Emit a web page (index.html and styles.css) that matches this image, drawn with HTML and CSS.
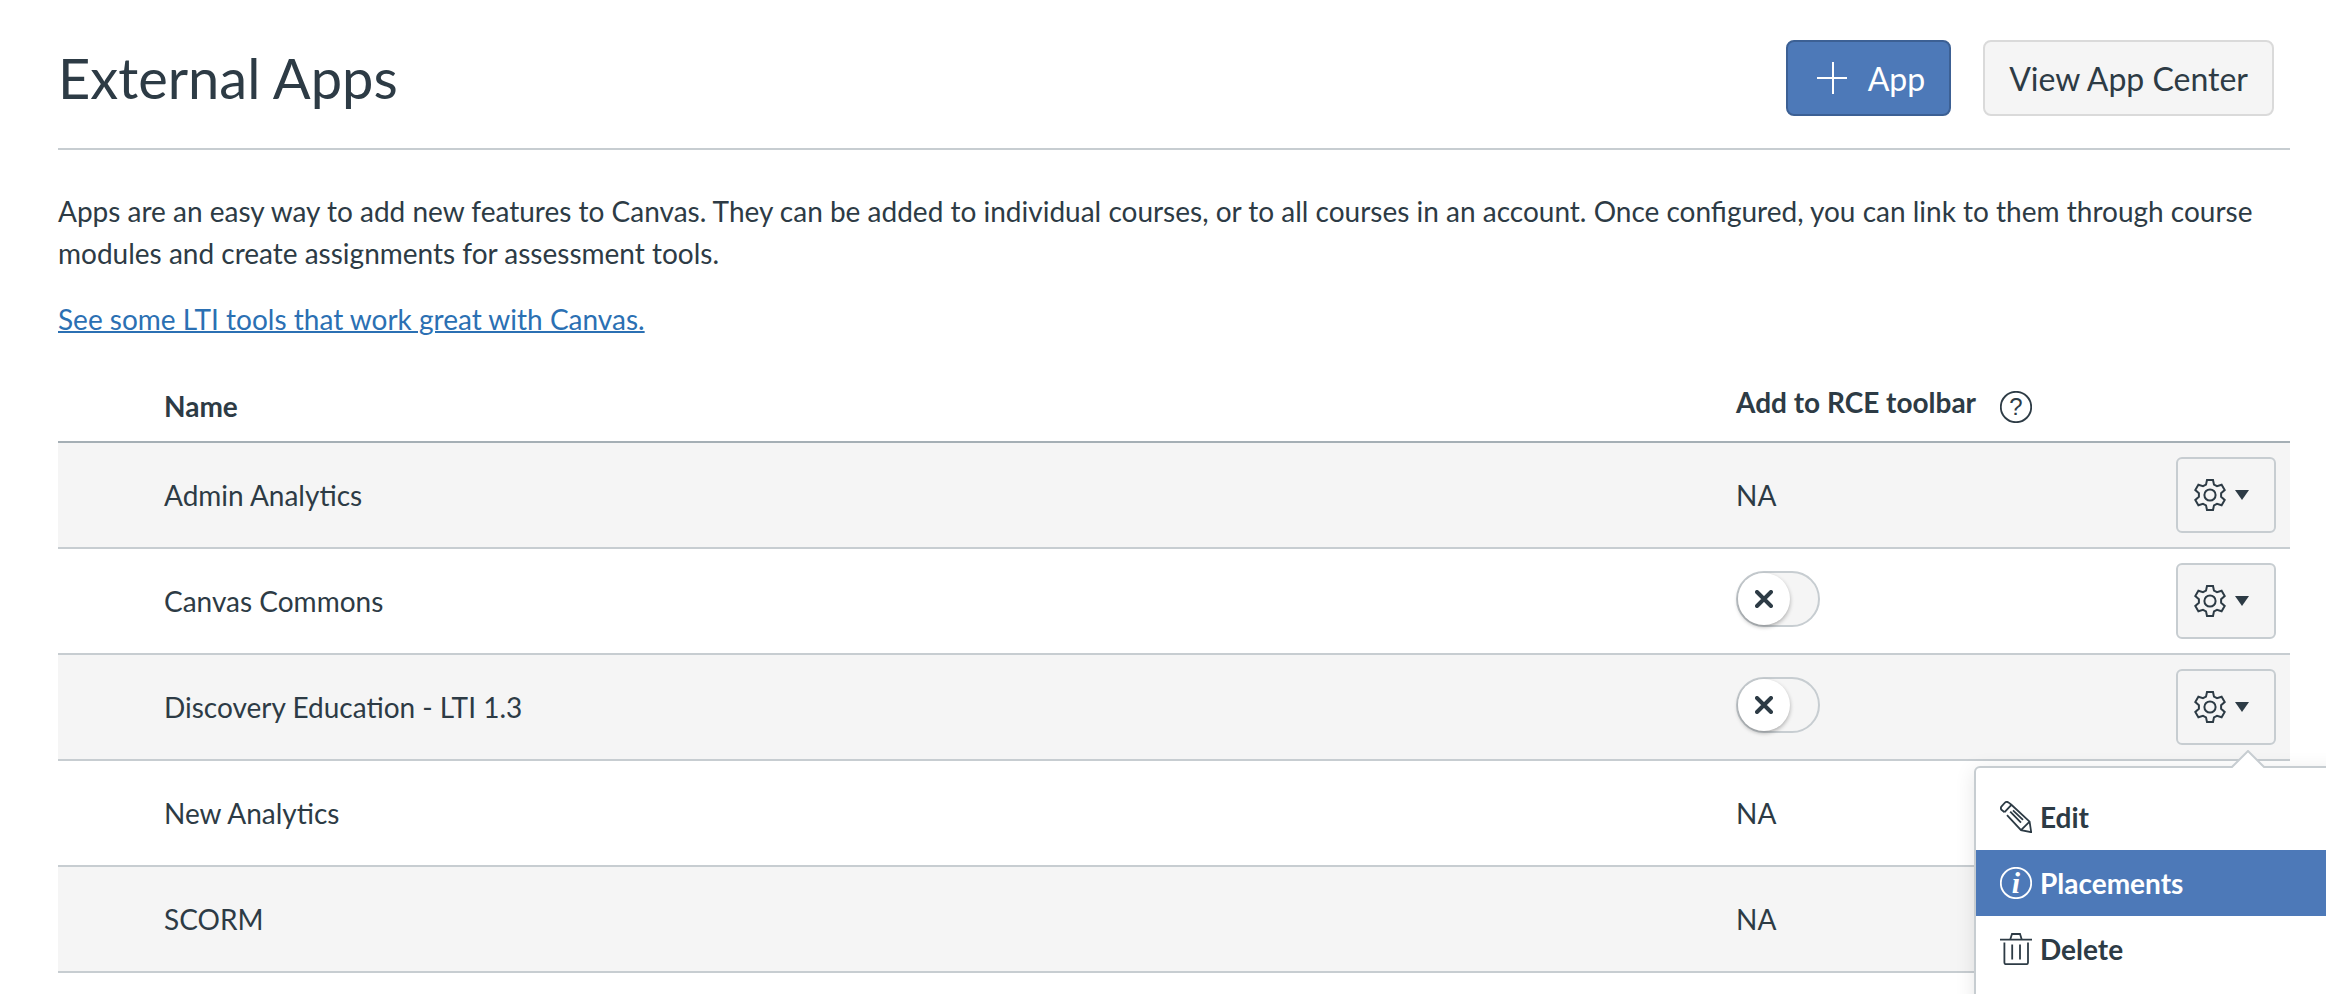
FILE: index.html
```
<!DOCTYPE html>
<html lang="en">
<head>
    <meta charset="UTF-8">
    <meta name="viewport" content="width=device-width, initial-scale=1.0">
    <title>External Apps</title>
    <link rel="stylesheet" href="styles.css">
</head>
<body>

    <!-- Shared icons -->
    <svg class="icon-defs" aria-hidden="true">
        <symbol id="icon-gear" viewBox="-16 -16 32 32">
            <path d="M-4 -10.4 L-3 -15 H3 L4 -10.4 L7 -8.9 L11.6 -10.3 L14.7 -5 L11.1 -1.7 V1.7 L14.7 5 L11.6 10.3 L7 8.9 L4 10.4 L3 15 H-3 L-4 10.4 L-7 8.9 L-11.6 10.3 L-14.7 5 L-11.1 1.7 V-1.7 L-14.7 -5 L-11.6 -10.3 L-7 -8.9 Z"/>
            <circle cx="0" cy="0" r="5.6"/>
        </symbol>
        <symbol id="icon-caret" viewBox="0 0 14 10">
            <path d="M0 0 H14 L7 10 Z"/>
        </symbol>
        <symbol id="icon-x" viewBox="0 0 18 18">
            <path d="M2 2 L16 16 M16 2 L2 16"/>
        </symbol>
    </svg>

    <div class="page">
        <header class="page-header">
            <h1>External Apps</h1>
            <div class="actions">
                <button type="button" class="btn btn-primary">
                    <svg class="icon" viewBox="0 0 32 32" aria-hidden="true"><path d="M17 0 V32 M1 16 H31"/></svg>
                    App
                </button>
                <button type="button" class="btn">View App Center</button>
            </div>
        </header>

        <p class="intro">Apps are an easy way to add new features to Canvas. They can be added to individual courses, or to all courses in an account. Once configured, you can link to them through course modules and create assignments for assessment tools.</p>
        <p class="intro"><a href="#">See some LTI tools that work great with Canvas.</a></p>

        <table class="apps">
            <thead>
                <tr>
                    <th class="col-status"></th>
                    <th class="col-name">Name</th>
                    <th class="col-rce">
                        <div class="rce-head">
                            Add to RCE toolbar
                            <button type="button" class="help" aria-label="Help">
                                <svg class="icon thin" viewBox="0 0 32 32" aria-hidden="true">
                                    <circle cx="16" cy="16" r="15.2"/>
                                    <text class="help-mark" x="16" y="24" text-anchor="middle">?</text>
                                </svg>
                            </button>
                        </div>
                    </th>
                    <th class="col-actions"></th>
                </tr>
            </thead>
            <tbody>
                <tr>
                    <td></td>
                    <td>Admin Analytics</td>
                    <td>NA</td>
                    <td>
                        <button type="button" class="gear" aria-label="Admin Analytics settings">
                            <svg class="icon"><use href="#icon-gear"/></svg>
                            <svg class="caret"><use href="#icon-caret"/></svg>
                        </button>
                    </td>
                </tr>
                <tr>
                    <td></td>
                    <td>Canvas Commons</td>
                    <td class="toggle-cell">
                        <label class="toggle">
                            <input type="checkbox" aria-label="Add Canvas Commons to RCE toolbar">
                            <span class="knob"><svg class="x-mark"><use href="#icon-x"/></svg></span>
                        </label>
                    </td>
                    <td>
                        <button type="button" class="gear" aria-label="Canvas Commons settings">
                            <svg class="icon"><use href="#icon-gear"/></svg>
                            <svg class="caret"><use href="#icon-caret"/></svg>
                        </button>
                    </td>
                </tr>
                <tr>
                    <td></td>
                    <td>Discovery Education - LTI 1.3</td>
                    <td class="toggle-cell">
                        <label class="toggle">
                            <input type="checkbox" aria-label="Add Discovery Education to RCE toolbar">
                            <span class="knob"><svg class="x-mark"><use href="#icon-x"/></svg></span>
                        </label>
                    </td>
                    <td>
                        <div class="dropdown">
                            <button type="button" class="gear" aria-label="Discovery Education settings" aria-expanded="true">
                                <svg class="icon"><use href="#icon-gear"/></svg>
                                <svg class="caret"><use href="#icon-caret"/></svg>
                            </button>
                            <div class="menu">
                                <svg class="menu-arrow" viewBox="0 0 34 18" aria-hidden="true"><path d="M0 18 L17 1 L34 18"/></svg>
                                <a href="#" class="menu-item">
                                    <svg class="icon thin" viewBox="0 0 32 32" aria-hidden="true">
                                        <path d="M4.6 11.2 L1.8 9 Q0 7.4 1.6 5.4 L4.6 2 Q6.4 0 8.4 1.4 L11.4 3.8 L29.6 20.6 L31.2 31.2 L21 29.2 L7 14.2 M4.6 11.2 L11.4 3.8 M10.2 10.6 L21 21.6 M13 9.4 L23 18.8 M21 29.2 L29.6 20.6"/>
                                    </svg>
                                    Edit
                                </a>
                                <a href="#" class="menu-item active">
                                    <svg class="icon thin" viewBox="0 0 32 32" aria-hidden="true">
                                        <circle cx="16" cy="16" r="15.2"/>
                                        <text class="info-mark" x="16" y="26" text-anchor="middle">i</text>
                                    </svg>
                                    Placements
                                </a>
                                <a href="#" class="menu-item">
                                    <svg class="icon thin" viewBox="0 0 32 32" aria-hidden="true">
                                        <path d="M0 6.6 H32 M10.4 6 L12 1 H20 L21.6 6 M4.4 9.4 V29.4 Q4.4 31.2 6.2 31.2 H26.2 Q28 31.2 28 29.4 V9.4 M12.2 11.4 V26.4 M20 11.4 V26.4"/>
                                    </svg>
                                    Delete
                                </a>
                            </div>
                        </div>
                    </td>
                </tr>
                <tr>
                    <td></td>
                    <td>New Analytics</td>
                    <td>NA</td>
                    <td></td>
                </tr>
                <tr>
                    <td></td>
                    <td>SCORM</td>
                    <td>NA</td>
                    <td></td>
                </tr>
            </tbody>
        </table>
    </div>

</body>
</html>
```
FILE: styles.css
```
* {
    box-sizing: border-box;
}

body {
    font-family: Lato, 'Liberation Sans', sans-serif;
    font-size: 28px;
    line-height: 42px;
    margin: 0;
    background-color: #fff;
    color: #2d3b45;
}

.page {
    height: 100vh;
    padding: 40px 36px 0 58px;
    overflow: hidden;
}

.icon-defs {
    display: none;
}

.icon {
    width: 32px;
    height: 32px;
    flex: none;
    fill: none;
    stroke: currentColor;
    stroke-width: 2;
}

.icon.thin {
    stroke-width: 1.8;
}

/* Header */
.page-header {
    display: flex;
    justify-content: space-between;
    align-items: center;
    padding: 0 16px 32px 0;
    border-bottom: 2px solid #c7cdd1;
}

h1 {
    margin: 0;
    font-size: 56px;
    font-weight: 400;
    line-height: 76px;
}

.actions {
    display: flex;
    gap: 32px;
}

.btn {
    display: flex;
    align-items: center;
    gap: 20px;
    height: 76px;
    padding: 0 24px;
    border: 2px solid #dadada;
    border-radius: 8px;
    background-color: #f5f5f5;
    color: #2d3b45;
    font-family: inherit;
    font-size: 32px;
    cursor: pointer;
}

.btn-primary {
    padding: 0 24px 0 28px;
    border-color: #3c6094;
    background-color: #4d79b8;
    color: #fff;
}

.intro {
    margin: 40px 0 24px;
}

.intro + .intro {
    margin: 0 0 24px;
}

.intro a {
    color: #2b70b3;
    text-decoration-thickness: 2px;
}

/* Apps table */
.apps {
    width: 100%;
    table-layout: fixed;
    border-collapse: separate;
    border-spacing: 0;
}

.apps th {
    height: 79px;
    padding: 0 0 14px;
    border-bottom: 2px solid #a5afb5;
    font-weight: 700;
    text-align: left;
    vertical-align: bottom;
}

.apps td {
    height: 106px;
    padding: 0;
    border-bottom: 2px solid #c7cdd1;
    vertical-align: middle;
}

.apps tbody tr:nth-child(odd) {
    background-color: #f5f5f5;
}

.col-status {
    width: 106px;
}

.col-rce {
    width: 440px;
}

.col-actions {
    width: 114px;
}

.rce-head {
    display: flex;
    align-items: flex-end;
    gap: 24px;
    padding-bottom: 4px;
}

.help {
    display: flex;
    padding: 0;
    border: none;
    background: none;
    color: inherit;
    cursor: pointer;
}

.help-mark {
    fill: currentColor;
    stroke: none;
    font-size: 24px;
    font-weight: 400;
}

.info-mark {
    fill: currentColor;
    stroke: none;
    font-family: 'Liberation Serif', serif;
    font-size: 30px;
    font-style: italic;
    font-weight: 700;
}

/* Settings button */
.gear {
    display: flex;
    align-items: center;
    gap: 9px;
    width: 100px;
    height: 76px;
    padding: 0 0 0 16px;
    border: 2px solid #c7cdd1;
    border-radius: 6px;
    background-color: #f5f5f5;
    color: #2d3b45;
    cursor: pointer;
}

.caret {
    width: 14px;
    height: 10px;
    fill: currentColor;
}

/* Toggle */
.apps .toggle-cell {
    padding-bottom: 4px;
}

.toggle {
    display: flex;
    position: relative;
    width: 84px;
    height: 56px;
    border: 2px solid #c7cdd1;
    border-radius: 28px;
    background-color: #f5f5f5;
    cursor: pointer;
}

.toggle input {
    position: absolute;
    inset: 0;
    margin: 0;
    opacity: 0;
}

.knob {
    display: flex;
    align-items: center;
    justify-content: center;
    width: 52px;
    height: 52px;
    border-radius: 50%;
    background-color: #fff;
    box-shadow: 0 2px 4px rgba(0, 0, 0, 0.3);
}

.x-mark {
    width: 18px;
    height: 18px;
    stroke: currentColor;
    stroke-width: 4;
    stroke-linecap: round;
}

/* Settings menu */
.dropdown {
    position: relative;
}

.menu {
    position: absolute;
    top: 97px;
    left: -202px;
    z-index: 1;
    width: 400px;
    padding: 16px 0 24px;
    border: 2px solid #c7cdd1;
    border-radius: 6px;
    background-color: #fff;
    box-shadow: 0 4px 20px rgba(0, 0, 0, 0.1);
}

.menu-arrow {
    position: absolute;
    top: -18px;
    left: 255px;
    width: 34px;
    height: 18px;
    fill: #fff;
    stroke: #c7cdd1;
    stroke-width: 2;
}

.menu-item {
    display: flex;
    align-items: center;
    gap: 8px;
    height: 66px;
    padding: 0 24px;
    color: #2d3b45;
    font-weight: 700;
    text-decoration: none;
}

.menu-item.active {
    background-color: #4d79b8;
    color: #fff;
}
```
